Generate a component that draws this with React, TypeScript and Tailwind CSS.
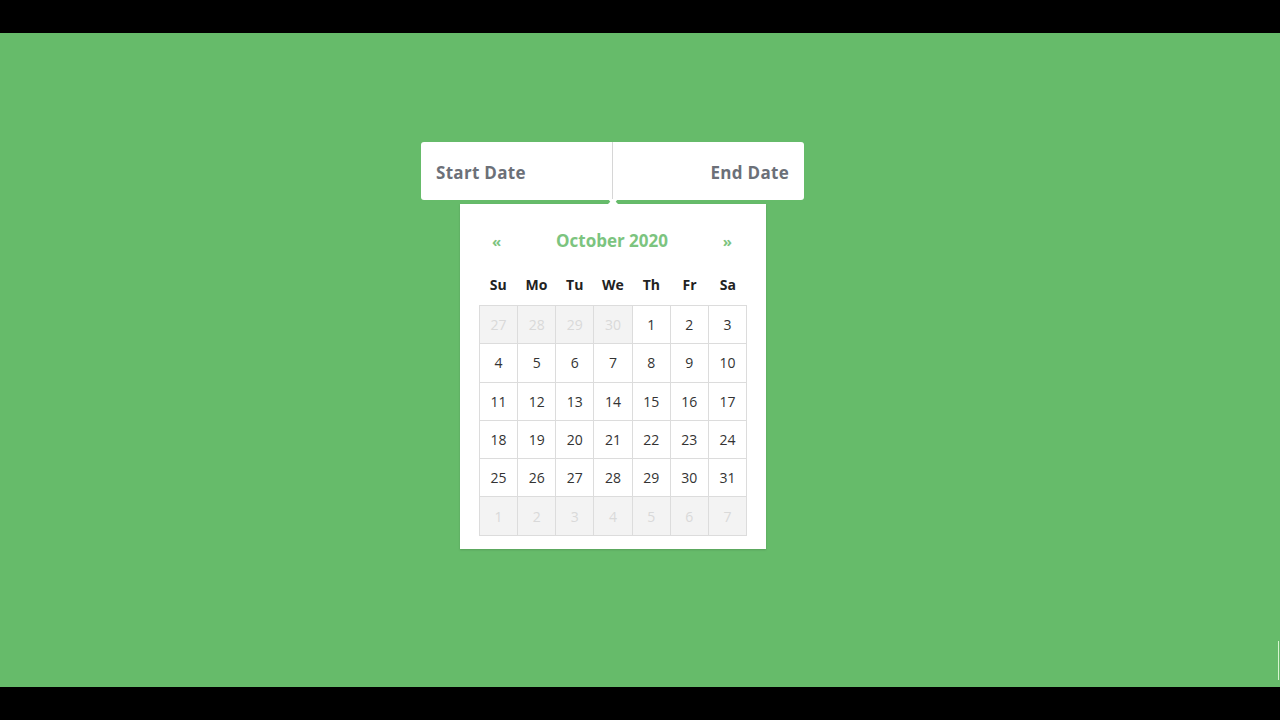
const weekDays = ["Su", "Mo", "Tu", "We", "Th", "Fr", "Sa"];

type Day = { n: number; muted: boolean };

function buildWeeks(): Day[][] {
  const days: Day[] = [];
  for (const n of [27, 28, 29, 30]) days.push({ n, muted: true });
  for (let n = 1; n <= 31; n++) days.push({ n, muted: false });
  for (let n = 1; n <= 7; n++) days.push({ n, muted: true });
  const weeks: Day[][] = [];
  for (let i = 0; i < days.length; i += 7) weeks.push(days.slice(i, i + 7));
  return weeks;
}

export default function App() {
  const weeks = buildWeeks();
  return (
    <div
      className="flex h-[720px] w-[1280px] flex-col bg-black"
      style={{ fontFamily: '"Open Sans", "Noto Sans", sans-serif' }}
    >
      <div className="h-[33px]" />
      <div className="relative flex h-[654px] flex-col items-start bg-[#66bb6a] pl-[421px] pt-[109px]">
        {/* date range input */}
        <div className="relative flex h-[58px] w-[383px] rounded-[3px] bg-white">
          <div className="flex flex-1 items-center border-r border-[#d6d6d6] pl-[15px] pt-[3px] text-[17px] font-bold tracking-[0.3px] text-[#6c7078]">
            Start Date
          </div>
          <div className="flex flex-1 items-center justify-end pr-[15px] pt-[3px] text-[17px] font-bold tracking-[0.3px] text-[#6c7078]">
            End Date
          </div>
          <div className="absolute left-[187px] top-[57px] h-0 w-0 border-x-[5px] border-t-[6px] border-x-transparent border-t-white" />
        </div>

        {/* calendar popup */}
        <div className="relative ml-[39px] mt-[4px] w-[306px] bg-white px-[19px] pb-[13px] pt-[24px] shadow-[0_1px_2px_rgba(0,0,0,0.15)]">
          <div className="absolute left-[148px] top-[-5px] h-0 w-0 border-x-[5px] border-b-[5px] border-x-transparent border-b-white" />
          <div className="flex h-[26px] items-center justify-between pl-[13px] pr-[15px] text-[#7cc47f]">
            <span className="text-[15px] font-bold">«</span>
            <span className="text-[17px] font-bold">October 2020</span>
            <span className="text-[15px] font-bold">»</span>
          </div>
          <div className="mt-[18px] grid h-[24px] grid-cols-7 items-center text-center text-[14px] font-bold text-[#222]">
            {weekDays.map((d) => (
              <span key={d}>{d}</span>
            ))}
          </div>
          <table className="mt-[9px] w-[268px] border-collapse text-[14px]">
            <tbody>
              {weeks.map((w, i) => (
                <tr key={i}>
                  {w.map((d, j) => (
                    <td
                      key={j}
                      className={
                        d.muted
                          ? "h-[38.3px] border border-[#dcdcdc] bg-[#f3f3f3] text-center text-[#d9d9d9]"
                          : "h-[38.3px] border border-[#dcdcdc] bg-white text-center text-[#333]"
                      }
                    >
                      {d.n}
                    </td>
                  ))}
                </tr>
              ))}
            </tbody>
          </table>
        </div>

        <div className="absolute bottom-[7px] right-[1px] h-[39px] w-[1px] bg-[#d8f5d0]" />
      </div>
      <div className="h-[33px]" />
    </div>
  );
}
